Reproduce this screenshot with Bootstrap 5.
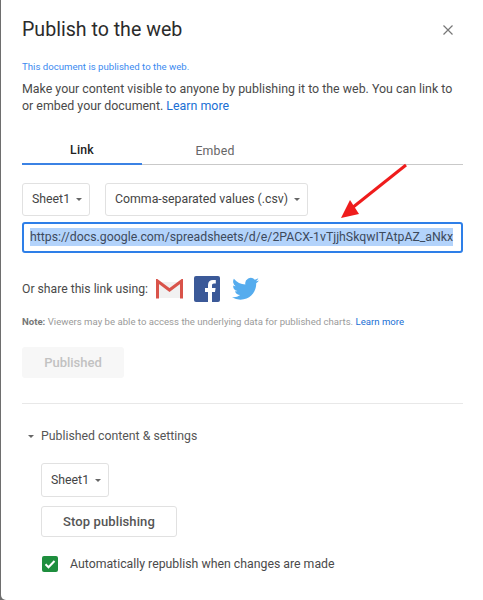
<!DOCTYPE html>
<html lang="en">
<head>
<meta charset="utf-8">
<title>Publish to the web</title>
<link href="https://cdn.jsdelivr.net/npm/bootstrap@5.3.0/dist/css/bootstrap.min.css" rel="stylesheet">
<style>
html,body{height:600px;overflow:hidden;background:#6e6e6e}
body{font-family:Roboto,"Liberation Sans",sans-serif;color:#444;font-size:12.3px}
.dlg{position:relative;width:482px;height:600px;margin-left:1px;background:#fff;border-radius:0 0 0 5px;padding:0 20px 0 21px}
.dlg-head{height:61px;padding-top:15px}
.dlg-title{font-size:19.6px;line-height:30px;font-weight:400;color:#2b2b2b;margin:0}
.x-btn{width:12px;height:12px;margin-top:9px;margin-right:9px;padding:0;border:0;background:none;display:flex}
.pub-note{font-size:9.65px;line-height:12px;color:#3b8af0;margin:0 0 7px}
.intro{font-size:12.4px;line-height:17px;color:#4a4a4a;margin:0;height:57px}
.g-link{color:#1a6fd4;text-decoration:none}
.tabs-row{height:29px;border-bottom:1px solid #c9c9c9;display:flex;margin-top:-1px}
.g-tab{width:120px;height:29px;line-height:28px;text-align:center;font-size:12.3px;color:#666;border:0;background:none;padding:0;letter-spacing:.2px}
.g-tab.wide{width:146px}
.g-tab.on{color:#222;font-weight:500;border-bottom:2px solid #3b82e4}
.dd{height:33px;border:1px solid #e1e1e1;border-radius:3px;background:#fff;color:#444;font-size:12.3px;padding:0 7px 0 9px;display:inline-flex;align-items:center;gap:6px}
.caret-g{width:0;height:0;border-left:3.5px solid transparent;border-right:3.5px solid transparent;border-top:3.5px solid #666}
.sel-row{margin-top:18px;gap:15px}
.url-box{display:block;margin-top:6px;height:31px;width:441px;border:2px solid #2e7fe8;border-radius:3px;padding:0 6px;line-height:26px;font-size:12.3px;color:#3d4a5c;white-space:nowrap;overflow:hidden}
.url-box span{background:#b3d3fb;padding:2px 0}
.share{margin-top:22px;height:28px;font-size:12.2px;color:#4a4a4a}
.ic-g{margin-left:8px}.ic-f{margin-left:11px}.ic-t{margin-left:12px}
.note-line{font-size:9.6px;line-height:12px;margin:13px 0 0;color:#9a9a9a}
.note-line b{color:#777;font-weight:700}
.pub-btn{display:block;margin-top:19px;width:102px;height:31px;background:#f7f7f7;border:0;border-radius:3px;color:#c2c2c2;font-size:13px;font-weight:500}
.rule{height:1px;background:#e8e8e8;margin:25px 0 0}
.adv{margin-top:24px;height:16px;font-size:12.3px;color:#555;padding-left:6px;gap:7px}
.adv-in{padding-left:19px}
.dd2{display:inline-flex;margin-top:19px;height:34px}
.stop-btn{display:block;margin-top:9px;width:136px;height:31px;background:#fff;border:1px solid #e1e1e1;border-radius:3px;color:#555;font-size:13px;font-weight:500;letter-spacing:.1px}
.auto{margin-top:18px;gap:12px;color:#4a4a4a;font-size:12.3px;padding-left:1px}
.chk{width:16px;height:16px;background:#1e8e3e;border-radius:2px;flex:none;display:flex}
.arrow{position:absolute;left:0;top:0;pointer-events:none}
</style>
</head>
<body>
<div class="dlg">
  <div class="dlg-head d-flex justify-content-between align-items-start">
    <h1 class="dlg-title">Publish to the web</h1>
    <button class="x-btn" aria-label="Close"><svg width="12" height="12" viewBox="0 0 12 12"><path d="M1.5 1.5l9 9M10.5 1.5l-9 9" stroke="#777" stroke-width="1.2" fill="none"/></svg></button>
  </div>
  <p class="pub-note">This document is published to the web.</p>
  <p class="intro">Make your content visible to anyone by publishing it to the web. You can link to<br>or embed your document. <a class="g-link" href="#">Learn more</a></p>
  <div class="tabs-row">
    <button class="g-tab on">Link</button>
    <button class="g-tab wide">Embed</button>
  </div>
  <div class="d-flex sel-row">
    <div class="dd">Sheet1 <i class="caret-g"></i></div>
    <div class="dd">Comma-separated values (.csv) <i class="caret-g"></i></div>
  </div>
  <div class="url-box"><span>https://docs.google.com/spreadsheets/d/e/2PACX-1vTjjhSkqwITAtpAZ_aNkx</span></div>
  <div class="share d-flex align-items-center">
    <span>Or share this link using:</span>
    <svg class="ic-g" width="27" height="20" viewBox="0 0 27 20"><path d="M1 3h25v16H1z" fill="#f1f1f1"/><path d="M1.500 19.500V2L13.500 11 25.500 2V19.500" fill="none" stroke="#d9534a" stroke-width="3"/></svg>
    <svg class="ic-f" width="26" height="26" viewBox="0 0 26 26"><rect width="26" height="26" rx="2" fill="#3b5998"/><path d="M18 26V16h3l.6-4H18V9.500c0-1.200.5-2 2-2h1.800V4.100c-.6-.1-1.600-.2-2.800-.2-3 0-5 1.800-5 5V12h-3v4h3v10z" fill="#fff"/></svg>
    <svg class="ic-t" width="27" height="24" viewBox="0 0 24 20"><path d="M24 2.400a9.800 9.800 0 0 1-2.800.8 4.900 4.900 0 0 0 2.200-2.700 9.800 9.800 0 0 1-3.100 1.200A4.900 4.900 0 0 0 11.900 6.100 14 14 0 0 1 1.700.9a4.900 4.900 0 0 0 1.500 6.600 4.900 4.900 0 0 1-2.200-.6v.1a4.900 4.900 0 0 0 3.900 4.800 4.900 4.900 0 0 1-2.200.1 4.900 4.900 0 0 0 4.600 3.400A9.900 9.900 0 0 1 0 17.300 13.900 13.900 0 0 0 7.500 19.500c9.100 0 14-7.500 14-14v-.6A10 10 0 0 0 24 2.400z" fill="#55acee"/></svg>
  </div>
  <p class="note-line"><b>Note:</b> Viewers may be able to access the underlying data for published charts. <a class="g-link" href="#">Learn more</a></p>
  <button class="pub-btn" disabled>Published</button>
  <div class="rule"></div>
  <div class="adv d-flex align-items-center"><i class="caret-g"></i><span>Published content &amp; settings</span></div>
  <div class="adv-in">
    <div class="dd dd2">Sheet1 <i class="caret-g"></i></div>
    <button class="stop-btn">Stop publishing</button>
    <div class="auto d-flex align-items-center">
      <span class="chk"><svg width="16" height="16" viewBox="0 0 16 16"><path d="M3.500 8.300l3 3 6-6.300" stroke="#fff" stroke-width="2" fill="none"/></svg></span>
      <span>Automatically republish when changes are made</span>
    </div>
  </div>
  <svg class="arrow" width="482" height="600" viewBox="1 0 482 600"><path d="M406 165L352 208" stroke="#ef1c1c" stroke-width="3" fill="none"/><path d="M341 218l9-18 9 14z" fill="#ef1c1c"/></svg>
</div>
<script src="https://cdn.jsdelivr.net/npm/bootstrap@5.3.0/dist/js/bootstrap.bundle.min.js"></script>
</body>
</html>
